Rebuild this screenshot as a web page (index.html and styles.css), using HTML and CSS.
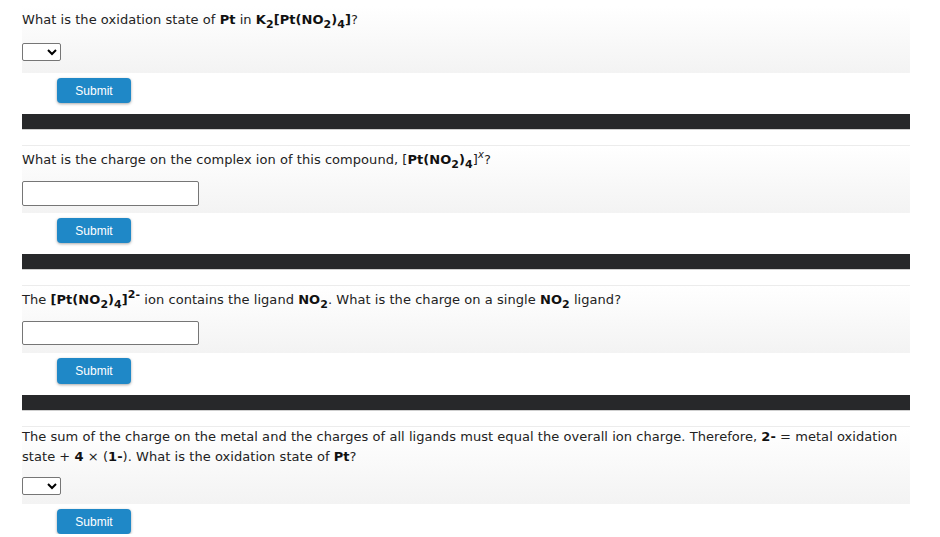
FILE: index.html
```html
<!DOCTYPE html>
<html>
<head>
<meta charset="utf-8">
<link rel="stylesheet" href="styles.css">
</head>
<body>
<div class="page">
  <section class="block b1">
    <div class="panel">
      <p class="q">What is the oxidation state of <b>Pt</b> in <b>K<sub>2</sub>[Pt(NO<sub>2</sub>)<sub>4</sub>]</b>?</p>
      <div class="field"><select class="sel"><option></option></select></div>
    </div>
    <button class="submit">Submit</button>
    <div class="bar"></div>
  </section>

  <section class="block b2">
    <div class="panel">
      <p class="q">What is the charge on the complex ion of this compound, [<b>Pt(NO<sub>2</sub>)<sub>4</sub></b>]<sup class="x">x</sup>?</p>
      <div class="field"><input class="txt" type="text"></div>
    </div>
    <button class="submit">Submit</button>
    <div class="bar"></div>
  </section>

  <section class="block b3">
    <div class="panel">
      <p class="q">The <b>[Pt(NO<sub>2</sub>)<sub>4</sub>]<sup>2-</sup></b> ion contains the ligand <b>NO<sub>2</sub></b>. What is the charge on a single <b>NO<sub>2</sub></b> ligand?</p>
      <div class="field"><input class="txt" type="text"></div>
    </div>
    <button class="submit">Submit</button>
    <div class="bar"></div>
  </section>

  <section class="block b4">
    <div class="panel">
      <p class="q">The sum of the charge on the metal and the charges of all ligands must equal the overall ion charge. Therefore, <b>2-</b> = metal oxidation state + <b>4</b> × (<b>1-</b>). What is the oxidation state of <b>Pt</b>?</p>
      <div class="field"><select class="sel"><option></option></select></div>
    </div>
    <button class="submit">Submit</button>
  </section>
</div>
</body>
</html>
```

FILE: styles.css
```css
html, body {
  margin: 0;
  padding: 0;
  background: #fff;
}

.page {
  width: 888px;
  margin-left: 22px;
  padding-top: 5px;
  font-family: "DejaVu Sans", Verdana, sans-serif;
  font-size: 13px;
  letter-spacing: 0.05px;
  color: #222;
}

.block {
  display: flex;
  flex-direction: column;
  align-items: flex-start;
}

.block + .block {
  margin-top: 15px;
}

.panel {
  align-self: stretch;
  border-top: 1px solid #ececec;
  background: linear-gradient(#ffffff, #f3f3f3);
  padding: 4px 0 7px;
}

.b1 .panel {
  border-top-color: #fff;
  padding-bottom: 12px;
}

.b3 .panel {
  padding-top: 4px;
  padding-bottom: 8px;
}

.b4 .panel {
  padding-top: 0;
  padding-bottom: 9px;
}

.q {
  margin: 0;
  line-height: 20px;
}

.q b {
  color: #111;
}

.q sub {
  font-size: 11px;
  line-height: 0;
  vertical-align: -4px;
}

.q sup {
  font-size: 11px;
  line-height: 0;
  vertical-align: 6px;
}

.q sup.x {
  font-style: italic;
  font-size: 10px;
}

.field {
  margin-top: 11px;
  display: flex;
}

.b1 .field {
  margin-top: 13px;
}

.b3 .field {
  margin-top: 11px;
}

.b4 .field {
  margin-top: 10px;
}

.sel {
  width: 39px;
  height: 18px;
  margin: 0;
  border: 1px solid #767676;
  border-radius: 2px;
  background: #fff;
  font-size: 11px;
  padding: 0;
}

.txt {
  width: 177px;
  height: 25px;
  box-sizing: border-box;
  margin: 0;
  border: 1px solid #767676;
  border-radius: 2px;
  background: #fff;
  padding: 0 4px;
}

.b3 .txt {
  height: 24px;
}

.submit {
  margin: 5px 0 0 35px;
  width: 74px;
  height: 25px;
  border: none;
  border-radius: 4px;
  background: #1f88c7;
  color: #fff;
  font-family: "Liberation Sans", Arial, sans-serif;
  font-size: 12px;
  letter-spacing: 0;
  box-shadow: 0 1px 3px rgba(0, 0, 0, 0.35);
  padding: 0;
}

.b3 .submit {
  height: 26px;
}

.bar {
  align-self: stretch;
  margin-top: 11px;
  height: 15px;
  background: #27282a;
  border-bottom: 1px solid #cfcfcf;
}
```
